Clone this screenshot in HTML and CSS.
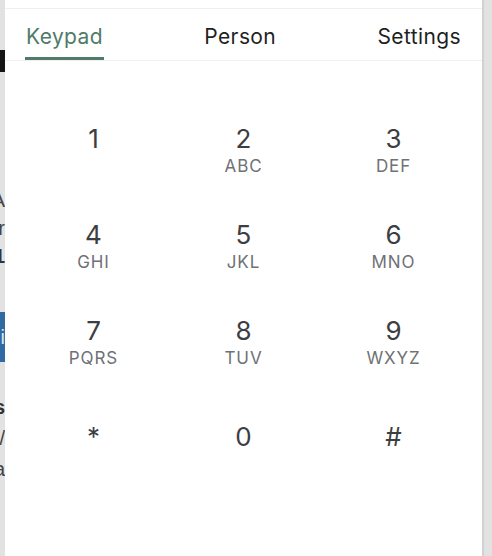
FILE: index.html
```html
<!DOCTYPE html>
<html lang="en">
<head>
<meta charset="UTF-8">
<meta name="viewport" content="width=device-width, initial-scale=1.0">
<title>Dialer</title>
<link rel="stylesheet" href="styles.css">
</head>
<body>
<!-- page behind the drawer, only its edge shows -->
<div class="backdrop">
  <div class="bd-bar"></div>
  <div class="bd-line">A</div>
  <div class="bd-line">r</div>
  <div class="bd-line bold">1</div>
  <div class="bd-button">i</div>
  <div class="bd-line low bold">s</div>
  <div class="bd-line low">/</div>
  <div class="bd-line low">a</div>
</div>

<div class="drawer">
  <div class="drawer-top"></div>
  <div class="tabs">
    <button class="tab active">Keypad</button>
    <button class="tab">Person</button>
    <button class="tab">Settings</button>
  </div>

  <div class="keypad">
    <div class="key"><span class="digit">1</span><span class="letters">&nbsp;</span></div>
    <div class="key"><span class="digit">2</span><span class="letters">ABC</span></div>
    <div class="key"><span class="digit">3</span><span class="letters">DEF</span></div>
    <div class="key"><span class="digit">4</span><span class="letters">GHI</span></div>
    <div class="key"><span class="digit">5</span><span class="letters">JKL</span></div>
    <div class="key"><span class="digit">6</span><span class="letters">MNO</span></div>
    <div class="key"><span class="digit">7</span><span class="letters">PQRS</span></div>
    <div class="key"><span class="digit">8</span><span class="letters">TUV</span></div>
    <div class="key"><span class="digit">9</span><span class="letters">WXYZ</span></div>
    <div class="key"><span class="digit">*</span></div>
    <div class="key"><span class="digit">0</span></div>
    <div class="key"><span class="digit">#</span></div>
  </div>
</div>
</body>
</html>
```

FILE: styles.css
```css
body {
  margin: 0;
  padding: 0;
  font-family: Inter, "Noto Sans", sans-serif;
  background-color: #e2e2e2;
  height: 556px;
  overflow: hidden;
}

/* page behind */
.backdrop {
  width: 5px;
  overflow: hidden;
  padding-top: 50px;
  font-family: "Liberation Sans", sans-serif;
  color: #444;
}
.bd-bar {
  height: 22px;
  background-color: #151515;
  margin-bottom: 114px;
}
.bd-line {
  display: flex;
  justify-content: flex-end;
  height: 28px;
  line-height: 28px;
  font-size: 20px;
}
.bd-line.low {
  height: 31px;
  line-height: 31px;
}
.bd-line.bold {
  font-weight: bold;
  color: #333;
}
.bd-button {
  display: flex;
  justify-content: flex-end;
  margin-top: 42px;
  margin-bottom: 30px;
  height: 50px;
  line-height: 50px;
  font-size: 20px;
  background-color: #2f6aa3;
  color: #dbe6f1;
}

/* drawer */
.drawer {
  position: fixed;
  top: 0;
  left: 5px;
  right: 8px;
  bottom: 0;
  background-color: #fff;
  border-right: 2px solid #d2d2d2;
}
.drawer-top {
  height: 8px;
  border-bottom: 1px solid #efefef;
}
.tabs {
  display: flex;
  justify-content: space-between;
  padding: 0 20px;
  border-bottom: 1px solid #f0f0f0;
}
.tab {
  font-family: inherit;
  font-size: 21px;
  letter-spacing: 0.4px;
  line-height: 24px;
  color: #1f1f1f;
  background: none;
  border: none;
  border-bottom: 3px solid transparent;
  padding: 16px 1px 8px;
  margin: 0;
  cursor: pointer;
}
.tab.active {
  color: #4f7b68;
  border-bottom-color: #4f7b68;
}

.keypad {
  display: grid;
  grid-template-columns: repeat(3, 150px);
  grid-auto-rows: 96px;
  justify-content: center;
  padding-top: 40px;
}
.key {
  display: flex;
  flex-direction: column;
  align-items: center;
  justify-content: center;
}
.digit {
  font-size: 26px;
  line-height: 32px;
  color: #3d3e42;
}
.letters {
  margin-top: 1px;
  font-size: 17px;
  letter-spacing: 0.9px;
  line-height: 20px;
  color: #707176;
}
```
